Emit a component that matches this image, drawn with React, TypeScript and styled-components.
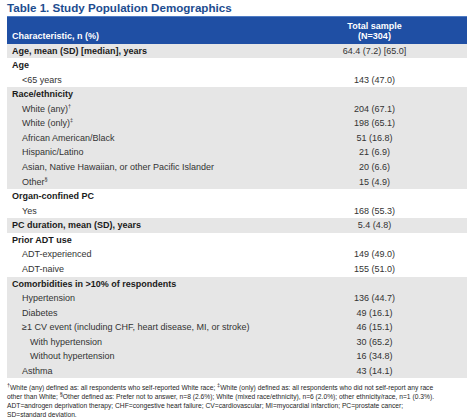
import React from 'react'
import styled, { createGlobalStyle } from 'styled-components'

const GlobalStyle = createGlobalStyle`
    html, body {
        margin: 0;
        padding: 0;
        background: #fff;
    }
    body {
        font-family: 'Liberation Sans', Arial, sans-serif;
        color: #262626;
    }
`

const Page = styled.div`
    display: flex;
    flex-direction: column;
    width: 474px;
    padding: 0 7px;
    box-sizing: border-box;
`

const Title = styled.h1`
    margin: 0;
    height: 16px;
    font-size: 11.6px;
    line-height: 16px;
    font-weight: 700;
    color: #1d4c8f;
`

const Table = styled.table`
    width: 460px;
    border-collapse: collapse;
    border-spacing: 0;
    table-layout: fixed;
    font-size: 9px;
`

const HeadCell = styled.th<{ $center?: boolean }>`
    height: 27px;
    box-sizing: border-box;
    padding: 0 0 3px ${(p) => (p.$center ? '0' : '5px')};
    background: #1f4fa4;
    border-top: 1px solid #4f7cc4;
    color: #fff;
    font-weight: 700;
    line-height: 10px;
    vertical-align: bottom;
    text-align: ${(p) => (p.$center ? 'center' : 'left')};
`

const Group = styled.tbody<{ $shaded?: boolean }>`
    background: ${(p) => (p.$shaded ? '#e6e6e6' : '#fff')};
`

const LabelCell = styled.td<{ $level: number; $bold?: boolean }>`
    height: 14.56px;
    padding: 0 0 0 ${(p) => 5 + p.$level * 10 - (p.$level > 1 ? 2 : 0)}px;
    line-height: 14.56px;
    font-weight: ${(p) => (p.$bold ? 700 : 400)};
    color: ${(p) => (p.$bold ? '#1a1a1a' : '#333')};
    white-space: nowrap;
`

const ValueCell = styled.td`
    padding: 0;
    line-height: 14.56px;
    text-align: center;
    color: #333;
    white-space: nowrap;
`

const Mark = styled.sup`
    font-size: 5.5px;
    vertical-align: super;
    line-height: 0;
`

const Footnote = styled.div`
    padding-top: 5px;
    font-size: 6.7px;
    line-height: 9px;
    color: #262626;
    white-space: nowrap;
`

type Row = { label: React.ReactNode; value?: string; level: number; bold?: boolean }
type Section = { shaded: boolean; rows: Row[] }

const sections: Section[] = [
    { shaded: true, rows: [{ label: 'Age, mean (SD) [median], years', value: '64.4 (7.2) [65.0]', level: 0, bold: true }] },
    {
        shaded: false,
        rows: [
            { label: 'Age', level: 0, bold: true },
            { label: '<65 years', value: '143 (47.0)', level: 1 },
        ],
    },
    {
        shaded: true,
        rows: [
            { label: 'Race/ethnicity', level: 0, bold: true },
            { label: <>White (any)<Mark>†</Mark></>, value: '204 (67.1)', level: 1 },
            { label: <>White (only)<Mark>‡</Mark></>, value: '198 (65.1)', level: 1 },
            { label: 'African American/Black', value: '51 (16.8)', level: 1 },
            { label: 'Hispanic/Latino', value: '21 (6.9)', level: 1 },
            { label: 'Asian, Native Hawaiian, or other Pacific Islander', value: '20 (6.6)', level: 1 },
            { label: <>Other<Mark>§</Mark></>, value: '15 (4.9)', level: 1 },
        ],
    },
    {
        shaded: false,
        rows: [
            { label: 'Organ-confined PC', level: 0, bold: true },
            { label: 'Yes', value: '168 (55.3)', level: 1 },
        ],
    },
    { shaded: true, rows: [{ label: 'PC duration, mean (SD), years', value: '5.4 (4.8)', level: 0, bold: true }] },
    {
        shaded: false,
        rows: [
            { label: 'Prior ADT use', level: 0, bold: true },
            { label: 'ADT-experienced', value: '149 (49.0)', level: 1 },
            { label: 'ADT-naive', value: '155 (51.0)', level: 1 },
        ],
    },
    {
        shaded: true,
        rows: [
            { label: 'Comorbidities in >10% of respondents', level: 0, bold: true },
            { label: 'Hypertension', value: '136 (44.7)', level: 1 },
            { label: 'Diabetes', value: '49 (16.1)', level: 1 },
            { label: '≥1 CV event (including CHF, heart disease, MI, or stroke)', value: '46 (15.1)', level: 1 },
            { label: 'With hypertension', value: '30 (65.2)', level: 2 },
            { label: 'Without hypertension', value: '16 (34.8)', level: 2 },
            { label: 'Asthma', value: '43 (14.1)', level: 1 },
        ],
    },
]

export default function App(): React.ReactElement {
    return (
        <Page>
            <GlobalStyle />
            <Title>Table 1. Study Population Demographics</Title>
            <Table>
                <colgroup>
                    <col style={{ width: 275 }} />
                    <col style={{ width: 185 }} />
                </colgroup>
                <thead>
                    <tr>
                        <HeadCell>Characteristic, n (%)</HeadCell>
                        <HeadCell $center>
                            Total sample
                            <br />
                            (N=304)
                        </HeadCell>
                    </tr>
                </thead>
                {sections.map((s, i) => (
                    <Group key={i} $shaded={s.shaded}>
                        {s.rows.map((r, j) => (
                            <tr key={j}>
                                <LabelCell $level={r.level} $bold={r.bold}>
                                    {r.label}
                                </LabelCell>
                                <ValueCell>{r.value}</ValueCell>
                            </tr>
                        ))}
                    </Group>
                ))}
            </Table>
            <Footnote>
                <Mark>†</Mark>White (any) defined as: all respondents who self-reported White race; <Mark>‡</Mark>White (only)
                defined as: all respondents who did not self-report any race
                <br />
                other than White; <Mark>§</Mark>Other defined as: Prefer not to answer, n=8 (2.6%); White (mixed
                race/ethnicity), n=6 (2.0%); other ethnicity/race, n=1 (0.3%).
                <br />
                ADT=androgen deprivation therapy; CHF=congestive heart failure; CV=cardiovascular; MI=myocardial
                infarction; PC=prostate cancer;
                <br />
                SD=standard deviation.
            </Footnote>
        </Page>
    )
}
